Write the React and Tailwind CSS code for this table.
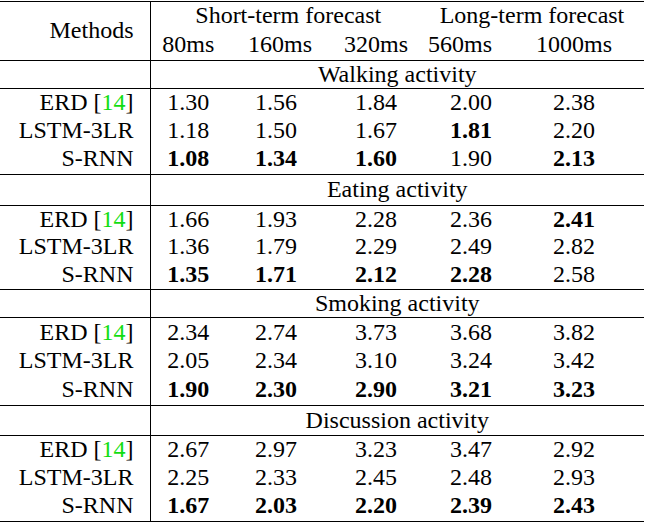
const sections = [
  {
    title: 'Walking activity',
    titleH: 'h-[28px]',
    rows: [
      ['1.30', '1.56', '1.84', '2.00', '2.38'],
      ['1.18', '1.50', '1.67', '*1.81', '2.20'],
      ['*1.08', '*1.34', '*1.60', '1.90', '*2.13'],
    ],
    rowH: ['h-[29px] pt-[2px]', 'h-[27px]', 'h-[30px] pb-[3px]'],
  },
  {
    title: 'Eating activity',
    titleH: 'h-[31px]',
    rows: [
      ['1.66', '1.93', '2.28', '2.36', '*2.41'],
      ['1.36', '1.79', '2.29', '2.49', '2.82'],
      ['*1.35', '*1.71', '*2.12', '*2.28', '2.58'],
    ],
    rowH: ['h-[28px] pt-[1px]', 'h-[27px]', 'h-[29px] pb-[2px]'],
  },
  {
    title: 'Smoking activity',
    titleH: 'h-[27px]',
    rows: [
      ['2.34', '2.74', '3.73', '3.68', '3.82'],
      ['2.05', '2.34', '3.10', '3.24', '3.42'],
      ['*1.90', '*2.30', '*2.90', '*3.21', '*3.23'],
    ],
    rowH: ['h-[30px] pt-[3px]', 'h-[27px]', 'h-[31px] pb-[4px]'],
  },
  {
    title: 'Discussion activity',
    titleH: 'h-[30px]',
    rows: [
      ['2.67', '2.97', '3.23', '3.47', '2.92'],
      ['2.25', '2.33', '2.45', '2.48', '2.93'],
      ['*1.67', '*2.03', '*2.20', '*2.39', '*2.43'],
    ],
    rowH: ['h-[29px] pt-[2px]', 'h-[27px]', 'h-[30px] pb-[3px]'],
  },
];

const names = ['ERD', 'LSTM-3LR', 'S-RNN'];

export default function App() {
  return (
    <div className="w-[648px] h-[523px] bg-white pt-px">
      <table className="w-[644px] border-collapse text-black font-['Times_New_Roman'] text-[24px] leading-[27px]">
        <colgroup>
          <col className="w-[150px]" />
          <col className="w-[76px]" />
          <col className="w-[100px]" />
          <col className="w-[100px]" />
          <col className="w-[90px]" />
          <col className="w-[116px]" />
          <col />
        </colgroup>
        <thead>
          <tr className="h-[26px] border-t border-black">
            <th rowSpan={2} className="border-r border-b border-black pr-[16px] pb-[1px] text-right font-normal font-['Times_New_Roman']">
              Methods
            </th>
            <th colSpan={3} className="p-0 text-center font-normal font-['Times_New_Roman']">Short-term forecast</th>
            <th colSpan={3} className="p-0 pr-[6px] text-center font-normal font-['Times_New_Roman']">Long-term forecast</th>
          </tr>
          <tr className="h-[31px] border-b border-black">
            <th className="p-0 text-center font-normal font-['Times_New_Roman']">80ms</th>
            <th className="p-0 pl-[8px] text-center font-normal font-['Times_New_Roman']">160ms</th>
            <th className="p-0 text-center font-normal font-['Times_New_Roman']">320ms</th>
            <th className="p-0 pr-[22px] text-center font-normal font-['Times_New_Roman']">560ms</th>
            <th className="p-0 text-center font-normal font-['Times_New_Roman']">1000ms</th>
            <th />
          </tr>
        </thead>
        {sections.map((s) => (
          <tbody key={s.title}>
            <tr className={`${s.titleH} border-b border-black`}>
              <td className="border-r border-black" />
              <td colSpan={6} className="p-0 text-center font-['Times_New_Roman']">{s.title}</td>
            </tr>
            {s.rows.map((r, i) => (
              <tr key={i} className={`${s.rowH[i]} ${i === 2 ? 'border-b border-black' : ''}`}>
                <td className="border-r border-black pr-[16px] text-right font-['Times_New_Roman']">
                  {names[i]}
                  {i === 0 && (
                    <>
                      {' '}[<span className="text-[#11dd11]">14</span>]
                    </>
                  )}
                </td>
                {r.map((v, j) => (
                  <td key={j} className="p-0 text-center font-['Times_New_Roman']">
                    {v.startsWith('*') ? <b className="font-bold">{v.slice(1)}</b> : v}
                  </td>
                ))}
                <td />
              </tr>
            ))}
          </tbody>
        ))}
      </table>
    </div>
  );
}
